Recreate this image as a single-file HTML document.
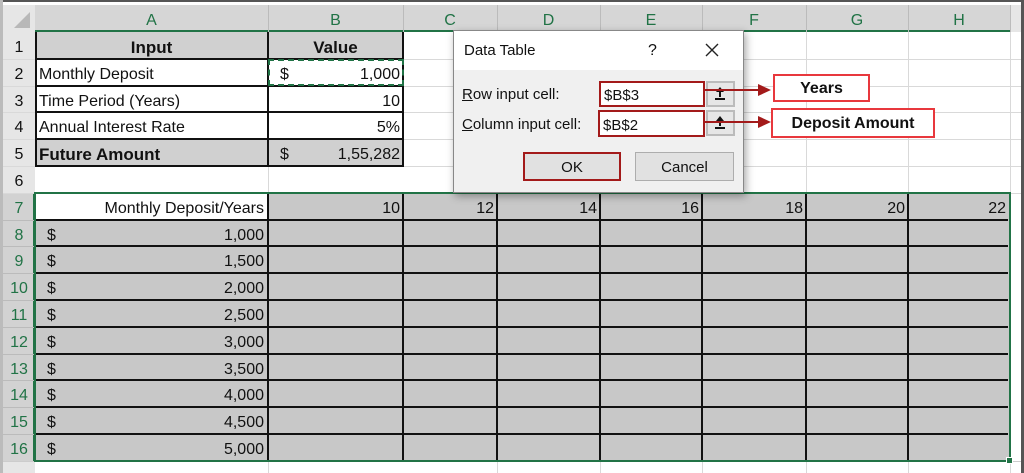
<!DOCTYPE html>
<html><head><meta charset="utf-8"><style>
*{margin:0;padding:0;box-sizing:border-box}
body{width:1024px;height:473px;overflow:hidden;background:#fff;position:relative;font-family:"Liberation Sans",sans-serif;font-size:16px;color:#111}
div{position:absolute}
.t{white-space:nowrap;line-height:26px;padding-top:2px}
.r{text-align:right}
.c{text-align:center}
.hl{height:1px;background:#d9d9d9}
.vl{width:1px;background:#d9d9d9}
.bh{height:2px;background:#111}
.bv{width:2px;background:#111}
.ch{top:5px;height:27px;line-height:27px;padding-top:2px;text-align:center;color:#217346;font-size:16px}
.rh{left:3px;width:32px;text-align:center;font-size:16px}
</style></head><body>
<!-- frame -->
<div style="left:0;top:0;width:1024px;height:2px;background:#555"></div>
<div style="left:1021px;top:0;width:3px;height:473px;background:#555"></div>
<div style="left:0;top:0;width:3px;height:473px;background:#bbb"></div>
<!-- column headers -->
<div style="left:3px;top:5px;width:1018px;height:27px;background:#d6d6d6"></div>
<div style="left:3px;top:5px;width:32px;height:27px;background:#e6e6e6"></div>
<div style="left:14px;top:12px;width:0;height:0;border-left:16px solid transparent;border-bottom:16px solid #b8b8b8"></div>
<div style="left:1010px;top:5px;width:11px;height:27px;background:#e6e6e6"></div>
<div style="left:35px;top:30px;width:975px;height:2px;background:#217346"></div>
<div class="ch" style="left:35px;width:233px">A</div>
<div class="ch" style="left:268px;width:135px">B</div>
<div class="ch" style="left:403px;width:94px">C</div>
<div class="ch" style="left:497px;width:103px">D</div>
<div class="ch" style="left:600px;width:102px">E</div>
<div class="ch" style="left:702px;width:104px">F</div>
<div class="ch" style="left:806px;width:102px">G</div>
<div class="ch" style="left:908px;width:102px">H</div>
<div class="vl" style="left:268px;top:5px;height:27px;background:#bbb"></div>
<div class="vl" style="left:403px;top:5px;height:27px;background:#bbb"></div>
<div class="vl" style="left:497px;top:5px;height:27px;background:#bbb"></div>
<div class="vl" style="left:600px;top:5px;height:27px;background:#bbb"></div>
<div class="vl" style="left:702px;top:5px;height:27px;background:#bbb"></div>
<div class="vl" style="left:806px;top:5px;height:27px;background:#bbb"></div>
<div class="vl" style="left:908px;top:5px;height:27px;background:#bbb"></div>
<div class="vl" style="left:1010px;top:5px;height:27px;background:#bbb"></div>
<!-- row headers -->
<div style="left:3px;top:32px;width:32px;height:441px;background:#e6e6e6"></div>
<div style="left:3px;top:193px;width:32px;height:268px;background:#d2d2d2"></div>
<div style="left:33px;top:193px;width:2px;height:268px;background:#217346"></div>
<div class="rh t" style="top:33px">1</div>
<div class="rh t" style="top:60px">2</div>
<div class="rh t" style="top:87px">3</div>
<div class="rh t" style="top:113px">4</div>
<div class="rh t" style="top:140px">5</div>
<div class="rh t" style="top:167px">6</div>
<div class="rh t" style="top:194px;color:#217346">7</div>
<div class="rh t" style="top:221px;color:#217346">8</div>
<div class="rh t" style="top:247px;color:#217346">9</div>
<div class="rh t" style="top:274px;color:#217346">10</div>
<div class="rh t" style="top:301px;color:#217346">11</div>
<div class="rh t" style="top:328px;color:#217346">12</div>
<div class="rh t" style="top:355px;color:#217346">13</div>
<div class="rh t" style="top:381px;color:#217346">14</div>
<div class="rh t" style="top:408px;color:#217346">15</div>
<div class="rh t" style="top:435px;color:#217346">16</div>
<!-- gridlines white area -->
<div class="hl" style="left:3px;top:59px;width:1018px"></div>
<div class="hl" style="left:3px;top:86px;width:1018px"></div>
<div class="hl" style="left:3px;top:112px;width:1018px"></div>
<div class="hl" style="left:3px;top:139px;width:1018px"></div>
<div class="hl" style="left:3px;top:166px;width:1018px"></div>
<div class="hl" style="left:3px;top:193px;width:1018px"></div>
<div class="hl" style="left:3px;top:220px;width:32px;background:#bbb"></div>
<div class="hl" style="left:3px;top:246px;width:32px;background:#bbb"></div>
<div class="hl" style="left:3px;top:273px;width:32px;background:#bbb"></div>
<div class="hl" style="left:3px;top:300px;width:32px;background:#bbb"></div>
<div class="hl" style="left:3px;top:327px;width:32px;background:#bbb"></div>
<div class="hl" style="left:3px;top:354px;width:32px;background:#bbb"></div>
<div class="hl" style="left:3px;top:380px;width:32px;background:#bbb"></div>
<div class="hl" style="left:3px;top:407px;width:32px;background:#bbb"></div>
<div class="hl" style="left:3px;top:434px;width:32px;background:#bbb"></div>
<div class="hl" style="left:3px;top:461px;width:1018px;background:#ccc"></div>
<div class="vl" style="left:268px;top:32px;height:441px"></div>
<div class="vl" style="left:497px;top:32px;height:441px"></div>
<div class="vl" style="left:600px;top:32px;height:441px"></div>
<div class="vl" style="left:702px;top:32px;height:441px"></div>
<div class="vl" style="left:806px;top:32px;height:441px"></div>
<div class="vl" style="left:908px;top:32px;height:441px"></div>
<div class="vl" style="left:1010px;top:32px;height:441px"></div>
<!-- top table -->
<div style="left:35px;top:32px;width:368px;height:27px;background:#d0d0d0"></div>
<div style="left:35px;top:139px;width:368px;height:27px;background:#d0d0d0"></div>
<div class="bh" style="left:35px;top:58px;width:369px"></div>
<div class="bh" style="left:35px;top:85px;width:369px"></div>
<div class="bh" style="left:35px;top:111px;width:369px"></div>
<div class="bh" style="left:35px;top:138px;width:369px"></div>
<div class="bh" style="left:35px;top:165px;width:369px"></div>
<div class="bv" style="left:267px;top:32px;height:134px"></div>
<div class="bv" style="left:402px;top:32px;height:134px"></div>
<div class="bv" style="left:35px;top:32px;height:134px"></div>
<div style="left:268px;top:59px;width:136px;height:27px;border:2px dashed #217346"></div>
<div class="t c" style="left:35px;top:33px;width:233px;font-weight:bold;font-size:17px">Input</div>
<div class="t c" style="left:268px;top:33px;width:135px;font-weight:bold;font-size:17px">Value</div>
<div class="t" style="left:39px;top:60px">Monthly Deposit</div>
<div class="t" style="left:39px;top:87px">Time Period (Years)</div>
<div class="t" style="left:39px;top:113px">Annual Interest Rate</div>
<div class="t" style="left:39px;top:140px;font-weight:bold;font-size:17px">Future Amount</div>
<div class="t" style="left:280px;top:60px">$</div>
<div class="t r" style="left:300px;top:60px;width:100px">1,000</div>
<div class="t r" style="left:300px;top:87px;width:100px">10</div>
<div class="t r" style="left:300px;top:113px;width:100px">5%</div>
<div class="t" style="left:280px;top:140px">$</div>
<div class="t r" style="left:300px;top:140px;width:100px">1,55,282</div>
<!-- data table -->
<div style="left:35px;top:193px;width:975px;height:268px;background:#c8c8c8"></div>
<div style="left:35px;top:193px;width:233px;height:27px;background:#fff"></div>
<div class="bh" style="left:35px;top:219px;width:973px"></div>
<div class="bh" style="left:35px;top:245px;width:973px"></div>
<div class="bh" style="left:35px;top:272px;width:973px"></div>
<div class="bh" style="left:35px;top:299px;width:973px"></div>
<div class="bh" style="left:35px;top:326px;width:973px"></div>
<div class="bh" style="left:35px;top:353px;width:973px"></div>
<div class="bh" style="left:35px;top:379px;width:973px"></div>
<div class="bh" style="left:35px;top:406px;width:973px"></div>
<div class="bh" style="left:35px;top:433px;width:973px"></div>
<div class="bv" style="left:267px;top:193px;height:268px"></div>
<div class="bv" style="left:402px;top:193px;height:268px"></div>
<div class="bv" style="left:496px;top:193px;height:268px"></div>
<div class="bv" style="left:599px;top:193px;height:268px"></div>
<div class="bv" style="left:701px;top:193px;height:268px"></div>
<div class="bv" style="left:805px;top:193px;height:268px"></div>
<div class="bv" style="left:907px;top:193px;height:268px"></div>
<div class="t r" style="left:40px;top:194px;width:224px">Monthly Deposit/Years</div>
<div class="t r" style="left:300px;top:194px;width:100px">10</div>
<div class="t r" style="left:400px;top:194px;width:94px">12</div>
<div class="t r" style="left:500px;top:194px;width:97px">14</div>
<div class="t r" style="left:600px;top:194px;width:99px">16</div>
<div class="t r" style="left:700px;top:194px;width:103px">18</div>
<div class="t r" style="left:800px;top:194px;width:105px">20</div>
<div class="t r" style="left:900px;top:194px;width:106px">22</div>
<div class="t" style="left:47px;top:221px">$</div><div class="t r" style="left:150px;top:221px;width:114px">1,000</div>
<div class="t" style="left:47px;top:247px">$</div><div class="t r" style="left:150px;top:247px;width:114px">1,500</div>
<div class="t" style="left:47px;top:274px">$</div><div class="t r" style="left:150px;top:274px;width:114px">2,000</div>
<div class="t" style="left:47px;top:301px">$</div><div class="t r" style="left:150px;top:301px;width:114px">2,500</div>
<div class="t" style="left:47px;top:328px">$</div><div class="t r" style="left:150px;top:328px;width:114px">3,000</div>
<div class="t" style="left:47px;top:355px">$</div><div class="t r" style="left:150px;top:355px;width:114px">3,500</div>
<div class="t" style="left:47px;top:381px">$</div><div class="t r" style="left:150px;top:381px;width:114px">4,000</div>
<div class="t" style="left:47px;top:408px">$</div><div class="t r" style="left:150px;top:408px;width:114px">4,500</div>
<div class="t" style="left:47px;top:435px">$</div><div class="t r" style="left:150px;top:435px;width:114px">5,000</div>
<div style="left:34px;top:192px;width:977px;height:270px;border:2px solid #217346"></div>
<div style="left:1006px;top:457px;width:7px;height:7px;background:#217346;border:1px solid #fff"></div>
<!-- dialog -->
<div style="left:453px;top:30px;width:291px;height:163px;background:#f0f0f0;border:1px solid #888;box-shadow:2px 3px 8px rgba(0,0,0,.35)"></div>
<div style="left:454px;top:31px;width:289px;height:39px;background:#fff"></div>
<div class="t" style="left:464px;top:36px;font-size:15px">Data Table</div>
<div class="t" style="left:648px;top:36px;font-size:16px">?</div>
<svg style="position:absolute;left:705px;top:43px" width="14" height="14"><path d="M1 1L13 13M13 1L1 13" stroke="#222" stroke-width="1.4"/></svg>
<div class="t" style="left:462px;top:80px;font-size:15px"><u>R</u>ow input cell:</div>
<div class="t" style="left:462px;top:110px;font-size:15px"><u>C</u>olumn input cell:</div>
<div style="left:599px;top:81px;width:106px;height:26px;background:#fff;border:2px solid #a31a1a"></div>
<div class="t" style="left:604px;top:81px;font-size:15px">$B$3</div>
<div style="left:598px;top:110px;width:107px;height:27px;background:#fff;border:2px solid #a31a1a"></div>
<div class="t" style="left:603px;top:111px;font-size:15px">$B$2</div>
<div style="left:706px;top:81px;width:29px;height:26px;background:#e6e6e6;border:2px solid #bbb"></div>
<div style="left:706px;top:110px;width:29px;height:26px;background:#e6e6e6;border:2px solid #bbb"></div>
<svg style="position:absolute;left:713px;top:85px" width="14" height="16"><path d="M7 2L3 7H6V12H8V7H11Z" fill="#111"/><rect x="2" y="13" width="10" height="2" fill="#111"/></svg>
<svg style="position:absolute;left:713px;top:114px" width="14" height="16"><path d="M7 2L3 7H6V12H8V7H11Z" fill="#111"/><rect x="2" y="13" width="10" height="2" fill="#111"/></svg>
<div style="left:523px;top:152px;width:98px;height:29px;background:#e1e1e1;border:2px solid #a31a1a"></div>
<div class="t c" style="left:523px;top:153px;width:98px;font-size:15px">OK</div>
<div style="left:635px;top:152px;width:99px;height:29px;background:#e1e1e1;border:1px solid #adadad"></div>
<div class="t c" style="left:635px;top:153px;width:99px;font-size:15px">Cancel</div>
<!-- arrows -->
<div style="left:705px;top:89px;width:56px;height:2px;background:#a31a1a"></div>
<div style="left:758px;top:84px;width:0;height:0;border-left:13px solid #a31a1a;border-top:6px solid transparent;border-bottom:6px solid transparent"></div>
<div style="left:705px;top:121px;width:56px;height:2px;background:#a31a1a"></div>
<div style="left:758px;top:116px;width:0;height:0;border-left:13px solid #a31a1a;border-top:6px solid transparent;border-bottom:6px solid transparent"></div>
<div style="left:773px;top:74px;width:97px;height:28px;background:#fff;border:2px solid #e8383d"></div>
<div class="t c" style="left:773px;top:74px;width:97px;font-weight:bold;font-size:16px">Years</div>
<div style="left:771px;top:108px;width:164px;height:30px;background:#fff;border:2px solid #e8383d"></div>
<div class="t c" style="left:771px;top:109px;width:164px;font-weight:bold;font-size:16px">Deposit Amount</div>
</body></html>
